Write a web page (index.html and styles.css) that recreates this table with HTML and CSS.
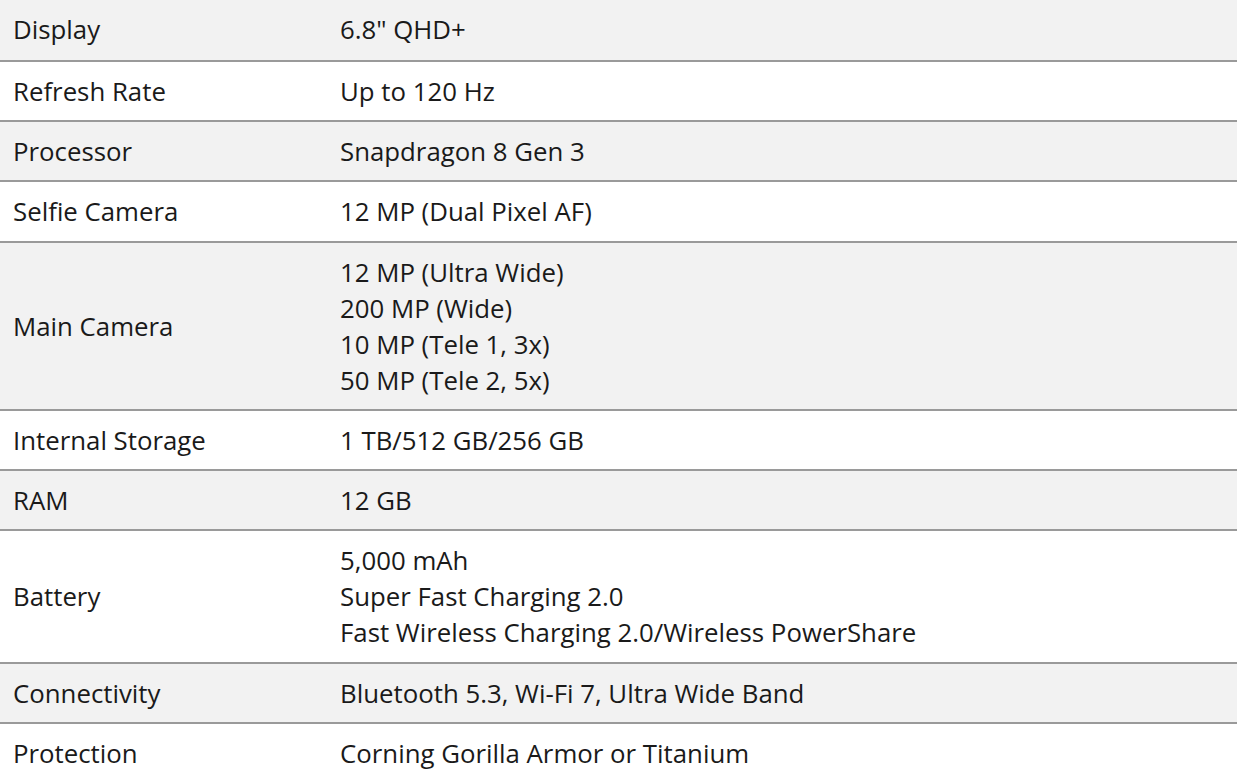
FILE: index.html
```html
<!DOCTYPE html>
<html lang="en">
<head>
<meta charset="utf-8">
<link rel="stylesheet" href="styles.css">
</head>
<body>
<table class="specs">
<tbody>
<tr><td class="k">Display</td><td class="v">6.8" QHD+</td></tr>
<tr><td class="k">Refresh Rate</td><td class="v">Up to 120 Hz</td></tr>
<tr><td class="k">Processor</td><td class="v">Snapdragon 8 Gen 3</td></tr>
<tr><td class="k">Selfie Camera</td><td class="v">12 MP (Dual Pixel AF)</td></tr>
<tr><td class="k">Main Camera</td><td class="v">12 MP (Ultra Wide)<br>200 MP (Wide)<br>10 MP (Tele 1, 3x)<br>50 MP (Tele 2, 5x)</td></tr>
<tr><td class="k">Internal Storage</td><td class="v">1 TB/512 GB/256 GB</td></tr>
<tr><td class="k">RAM</td><td class="v">12 GB</td></tr>
<tr><td class="k">Battery</td><td class="v">5,000 mAh<br>Super Fast Charging 2.0<br>Fast Wireless Charging 2.0/Wireless PowerShare</td></tr>
<tr><td class="k">Connectivity</td><td class="v">Bluetooth 5.3, Wi-Fi 7, Ultra Wide Band</td></tr>
<tr><td class="k">Protection</td><td class="v">Corning Gorilla Armor or Titanium</td></tr>
</tbody>
</table>
</body>
</html>
```
FILE: styles.css
```css
html, body {
  margin: 0;
  padding: 0;
  background: #ffffff;
}
body {
  font-family: "Open Sans", "Liberation Sans", sans-serif;
  color: #1a1a1a;
  overflow: hidden;
}
.specs {
  width: 1237px;
  border-collapse: collapse;
  font-size: 25.8px;
  line-height: 36px;
}
.specs tr {
  border-bottom: 2px solid #9a9a9a;
}
.specs tr:nth-child(odd) {
  background: #f2f2f2;
}
.specs td {
  padding: 11px 0 11.25px 13px;
  vertical-align: middle;
}
.specs tr:first-child td {
  padding-top: 11px;
  padding-bottom: 12.75px;
}
.specs td.k {
  width: 314px;
}
```
